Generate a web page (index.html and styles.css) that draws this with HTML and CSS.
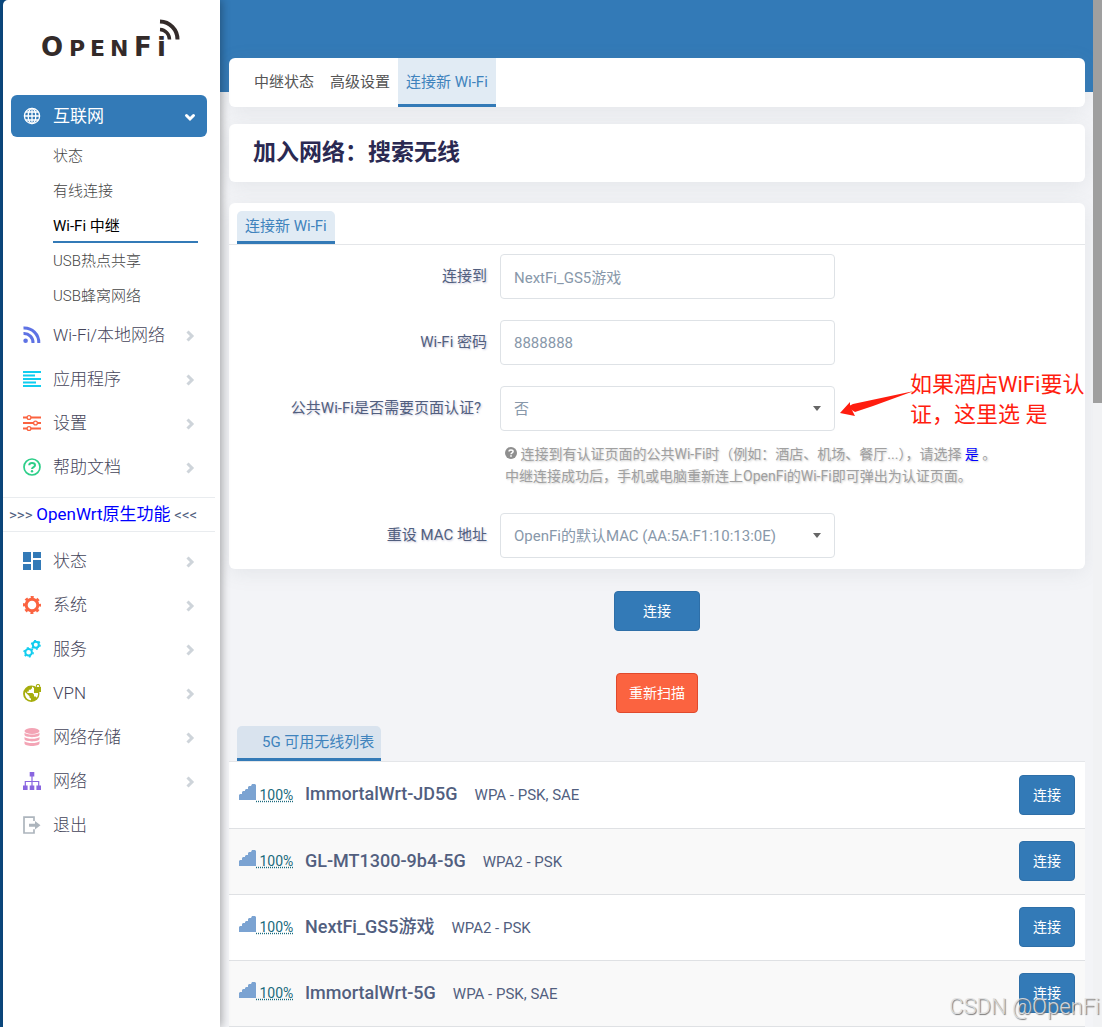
FILE: index.html
```html
<!DOCTYPE html>
<html lang="zh-CN">
<head>
<meta charset="utf-8">
<meta name="viewport" content="width=device-width, initial-scale=1">
<title>OpenFi - Wi-Fi 中继</title>
<link rel="stylesheet" href="styles.css">
</head>
<body>
<div class="shell">
  <aside class="sidebar">
    <a class="logo" href="#" aria-label="OpenFi">
      <svg width="146" height="48" viewBox="-4 0 146 48">
        <g class="logo-text">
          <text class="logo-big" x="-2" y="37">O</text>
          <text class="logo-small" x="26" y="37">P</text>
          <text class="logo-small" x="47" y="37">E</text>
          <text class="logo-small" x="67" y="37">N</text>
          <text class="logo-big" x="91" y="37">F</text>
          <text class="logo-big" x="114" y="37">i</text>
        </g>
        <g fill="none" stroke="#332b2a">
          <path d="M117 10.500a10 10 0 0 1 9.500 10" stroke-width="3.500"/>
          <path d="M117 2.500a18 18 0 0 1 17.500 18" stroke-width="4"/>
        </g>
      </svg>
    </a>
    <nav class="menu">
      <a class="item item-active" href="#">
        <svg class="icon" viewBox="0 0 18 18" fill="none" stroke="#fff" stroke-width="1.300"><circle cx="9" cy="9" r="7.600"/><ellipse cx="9" cy="9" rx="3.800" ry="7.600"/><path d="M9 1v16M1 9h16M2.500 5h13M2.500 13h13"/></svg>
        <span>互联网</span>
        <svg class="arrow" viewBox="0 0 12 12" fill="none" stroke="#fff" stroke-width="3" stroke-linecap="round"><path d="M2.500 4.500L6 8l3.500-3.500"/></svg>
      </a>
      <div class="submenu">
        <a href="#">状态</a>
        <a href="#">有线连接</a>
        <a class="current" href="#">Wi-Fi 中继</a>
        <a href="#">USB热点共享</a>
        <a href="#">USB蜂窝网络</a>
      </div>
      <a class="item" href="#">
        <svg class="icon" viewBox="0 0 18 18" fill="none" stroke="#5e72e4" stroke-width="3"><circle cx="2.600" cy="14.800" r="2.300" fill="#5e72e4" stroke="none"/><path d="M.5 7.500A9 9 0 0 1 10 17M.5 2A14.500 14.500 0 0 1 15.800 17"/></svg>
        <span>Wi-Fi/本地网络</span>
        <svg class="arrow" viewBox="0 0 12 12"><path d="M3.500 1.500L8 6l-4.500 4.500"/></svg>
      </a>
      <a class="item" href="#">
        <svg class="icon" viewBox="0 0 18 18" stroke="#11cdef" stroke-width="2"><path d="M0 2h18M0 5.500h12M0 9h18M0 12.500h13M0 16h18"/></svg>
        <span>应用程序</span>
        <svg class="arrow" viewBox="0 0 12 12"><path d="M3.500 1.500L8 6l-4.500 4.500"/></svg>
      </a>
      <a class="item" href="#">
        <svg class="icon" viewBox="0 0 18 18" fill="#fff" stroke="#fb6340" stroke-width="2"><path d="M0 3.500h18M0 9h18M0 14.500h18"/><g stroke-width="1.300"><circle cx="6" cy="3.500" r="1.900"/><circle cx="12.500" cy="9" r="1.900"/><circle cx="6" cy="14.500" r="1.900"/></g></svg>
        <span>设置</span>
        <svg class="arrow" viewBox="0 0 12 12"><path d="M3.500 1.500L8 6l-4.500 4.500"/></svg>
      </a>
      <a class="item" href="#">
        <svg class="icon" viewBox="0 0 18 18" fill="none" stroke="#2dce89" stroke-width="1.700"><circle cx="9" cy="9" r="8"/><path d="M6.200 7.300C6.300 5.600 7.500 5 9 5c1.700 0 3 .8 3 2.300C12 9.200 9.200 9 9 11" stroke-width="2"/><circle cx="9" cy="13.300" r="1.200" fill="#2dce89" stroke="none"/></svg>
        <span>帮助文档</span>
        <svg class="arrow" viewBox="0 0 12 12"><path d="M3.500 1.500L8 6l-4.500 4.500"/></svg>
      </a>
    </nav>
    <div class="divider">&gt;&gt;&gt; <a href="#">OpenWrt原生功能</a> &lt;&lt;&lt;</div>
    <nav class="menu">
      <a class="item" href="#">
        <svg class="icon" viewBox="0 0 18 18" fill="#337ab7"><path d="M0 0h8v10H0zM0 12h8v6H0zM10 0h8v6h-8zM10 8h8v10h-8z"/></svg>
        <span>状态</span>
        <svg class="arrow" viewBox="0 0 12 12"><path d="M3.500 1.500L8 6l-4.500 4.500"/></svg>
      </a>
      <a class="item" href="#">
        <svg class="icon" viewBox="0 0 18 18" fill="none" stroke="#fb6340"><circle cx="9" cy="9" r="5.800" stroke-width="3"/><circle cx="9" cy="9" r="7.900" stroke-width="2.200" stroke-dasharray="3.100 3.104" stroke-dashoffset="1.550"/></svg>
        <span>系统</span>
        <svg class="arrow" viewBox="0 0 12 12"><path d="M3.500 1.500L8 6l-4.500 4.500"/></svg>
      </a>
      <a class="item" href="#">
        <svg class="icon" viewBox="0 0 18 18" fill="none" stroke="#11cdef"><g stroke-width="2"><circle cx="5.600" cy="12.300" r="3.300"/><circle cx="12.800" cy="4.800" r="3"/></g><g stroke-width="1.400"><circle cx="5.600" cy="12.300" r="4.600" stroke-dasharray="2 2.817"/><circle cx="12.800" cy="4.800" r="4.300" stroke-dasharray="2 2.503"/></g></svg>
        <span>服务</span>
        <svg class="arrow" viewBox="0 0 12 12"><path d="M3.500 1.500L8 6l-4.500 4.500"/></svg>
      </a>
      <a class="item" href="#">
        <svg class="icon" viewBox="0 0 18 18"><circle cx="8.300" cy="9.700" r="8.200" fill="#a6ad0c"/><path d="M2 8l4.500 4.200v1.300l1.500 1.300v1.500C4 16 1.500 12.500 2 8zM9 2.500v1.800L7.500 5.800H5.800v1.700H4.300v1.600h5.200l1.500 1.500v2h1.700l1 1.200c1-1.300 1.500-3 1.300-4.800H11V4z" fill="#fff"/><path d="M12 3h6v5h-6z" fill="#a6ad0c"/><path d="M13.300 3.500V2.200a1.700 1.700 0 0 1 3.400 0v1.300" fill="none" stroke="#a6ad0c" stroke-width="1.100"/></svg>
        <span>VPN</span>
        <svg class="arrow" viewBox="0 0 12 12"><path d="M3.500 1.500L8 6l-4.500 4.500"/></svg>
      </a>
      <a class="item" href="#">
        <svg class="icon" viewBox="0 0 18 18" fill="#f3a4b5"><ellipse cx="9" cy="3" rx="7.500" ry="3"/><path d="M1.500 4.800c2 2.400 13 2.400 15 0v2c0 3.200-15 3.200-15 0zM1.500 9c2 2.400 13 2.400 15 0v2c0 3.200-15 3.200-15 0zM1.500 13.200c2 2.400 13 2.400 15 0v2c0 3.600-15 3.600-15 0z"/></svg>
        <span>网络存储</span>
        <svg class="arrow" viewBox="0 0 12 12"><path d="M3.500 1.500L8 6l-4.500 4.500"/></svg>
      </a>
      <a class="item" href="#">
        <svg class="icon" viewBox="0 0 18 18" fill="#8965e0"><path d="M6.700 0h4.600v4.600H6.700zM0 13.400h4.600V18H0zM6.700 13.400h4.600V18H6.700zM13.400 13.400H18V18h-4.600z"/><path d="M9 4v10M2.300 14v-4.500h13.400V14" fill="none" stroke="#8965e0" stroke-width="1.200"/></svg>
        <span>网络</span>
        <svg class="arrow" viewBox="0 0 12 12"><path d="M3.500 1.500L8 6l-4.500 4.500"/></svg>
      </a>
      <a class="item" href="#">
        <svg class="icon" viewBox="0 0 18 18" fill="none" stroke="#adb5bd" stroke-width="1.700"><path d="M11 5V1.200H1V17h10v-3.800"/><path d="M6 7.800h6V5l5.500 4.300L12 13.500v-2.700H6z" fill="#adb5bd" stroke="none"/></svg>
        <span>退出</span>
      </a>
    </nav>
  </aside>

  <main class="main">
    <nav class="card tabs">
      <a href="#">中继状态</a>
      <a href="#">高级设置</a>
      <a class="selected" href="#">连接新 Wi-Fi</a>
    </nav>

    <header class="card heading"><h1>加入网络：搜索无线</h1></header>

    <form class="join" onsubmit="return false">
      <section class="card panel">
        <div class="panel-head"><a class="tab" href="#">连接新 Wi-Fi</a></div>
        <div class="fields">
          <div class="field">
            <label for="ssid">连接到</label>
            <div class="control"><input id="ssid" type="text" value="NextFi_GS5游戏"></div>
          </div>
          <div class="field">
            <label for="key">Wi-Fi 密码</label>
            <div class="control"><input id="key" type="text" value="8888888"></div>
          </div>
          <div class="field">
            <label class="question" for="portal">公共Wi-Fi是否需要页面认证?</label>
            <div class="control">
              <div class="select"><select id="portal"><option>否</option><option>是</option></select></div>
              <p class="help">
                <svg width="12" height="12" viewBox="0 0 12 12"><circle cx="6" cy="6" r="6" fill="#8f8f8f"/><path d="M4 4.600C4 3.300 5 2.900 6 2.900s2.100.5 2.100 1.600C8.100 5.900 6 5.700 6 7.300" fill="none" stroke="#fff" stroke-width="1.500"/><path d="M5.200 8.200h1.600v1.500H5.200z" fill="#fff"/></svg>
                连接到有认证页面的公共Wi-Fi时（例如：酒店、机场、餐厅...），请选择 <b>是</b> 。<br>中继连接成功后，手机或电脑重新连上OpenFi的Wi-Fi即可弹出为认证页面。
              </p>
              <div class="note">
                <svg width="74" height="32" viewBox="0 0 74 32" fill="#ff1d0f"><path d="M74 3L13 16 7 19l8 5 18-6z"/><path d="M0 25L10 14v5l2 3 3 6z"/></svg>
                <p>如果酒店WiFi要认<br>证，这里选 是</p>
              </div>
            </div>
          </div>
          <div class="field">
            <label for="mac">重设 MAC 地址</label>
            <div class="control">
              <div class="select"><select id="mac"><option>OpenFi的默认MAC (AA:5A:F1:10:13:0E)</option></select></div>
            </div>
          </div>
        </div>
      </section>
      <div class="actions">
        <button class="btn btn-wide" type="submit">连接</button>
        <button class="btn btn-rescan" type="button">重新扫描</button>
      </div>
    </form>

    <section>
      <div class="panel-head"><a class="tab list-tab" href="#">5G 可用无线列表</a></div>
      <table class="networks">
        <tbody>
          <tr>
            <td class="signal"><svg viewBox="0 0 17 16"><path d="M0 16v-5l1-1h2V8l1-1h2V6l1-1h2V3l1-1h2l1-2h3l1 1v15z"/></svg><abbr title="信号 100%">&nbsp;100%</abbr></td>
            <td><strong>ImmortalWrt-JD5G</strong><span>WPA - PSK, SAE</span></td>
            <td class="action"><button class="btn" type="button">连接</button></td>
          </tr>
          <tr>
            <td class="signal"><svg viewBox="0 0 17 16"><path d="M0 16v-5l1-1h2V8l1-1h2V6l1-1h2V3l1-1h2l1-2h3l1 1v15z"/></svg><abbr title="信号 100%">&nbsp;100%</abbr></td>
            <td><strong>GL-MT1300-9b4-5G</strong><span>WPA2 - PSK</span></td>
            <td class="action"><button class="btn" type="button">连接</button></td>
          </tr>
          <tr>
            <td class="signal"><svg viewBox="0 0 17 16"><path d="M0 16v-5l1-1h2V8l1-1h2V6l1-1h2V3l1-1h2l1-2h3l1 1v15z"/></svg><abbr title="信号 100%">&nbsp;100%</abbr></td>
            <td><strong>NextFi_GS5游戏</strong><span>WPA2 - PSK</span></td>
            <td class="action"><button class="btn" type="button">连接</button></td>
          </tr>
          <tr>
            <td class="signal"><svg viewBox="0 0 17 16"><path d="M0 16v-5l1-1h2V8l1-1h2V6l1-1h2V3l1-1h2l1-2h3l1 1v15z"/></svg><abbr title="信号 100%">&nbsp;100%</abbr></td>
            <td><strong>ImmortalWrt-5G</strong><span>WPA - PSK, SAE</span></td>
            <td class="action"><button class="btn" type="button">连接</button></td>
          </tr>
        </tbody>
      </table>
    </section>
  </main>

  <div class="scrollbar"><div class="thumb"></div></div>
  <div class="watermark">CSDN @OpenFi</div>
</div>
</body>
</html>
```

FILE: styles.css
```css
* { box-sizing: border-box; }

body {
  margin: 0;
  background: #0b4a82;
  color: #525f7f;
  font: 15px/22px Roboto, "Noto Sans CJK SC", sans-serif;
}

a { color: inherit; text-decoration: none; }
p { margin: 0; }

.shell {
  position: relative;
  display: flex;
  min-height: 100vh;
  padding-left: 3px;
}

/* Sidebar */
.sidebar {
  position: relative;
  z-index: 1;
  flex: 0 0 217px;
  background: #fff;
  border-top-left-radius: 5px;
  box-shadow: 2px 0 8px rgba(0, 0, 0, .3);
}

.logo { display: block; height: 95px; padding: 19px 0 0 36px; }
.logo svg { display: block; }
.logo-text {
  font-family: "DejaVu Sans", sans-serif;
  font-weight: 700;
  fill: #332b2a;
}
.logo-big { font-size: 26px; }
.logo-small { font-size: 22px; }

.menu { padding: 0 13px 0 8px; }

.item {
  display: flex;
  align-items: center;
  height: 44px;
  padding: 0 11px 0 12px;
  font-size: 17px;
  font-weight: 300;
  color: #45455a;
}
.item span { flex: 1; }
.item-active {
  height: 42px;
  margin-bottom: 1px;
  border-radius: 6px;
  background: #337ab7;
  color: #fff;
  font-weight: 400;
}
.icon { width: 18px; height: 18px; margin-right: 12px; }
.arrow { width: 12px; height: 12px; margin-top: 2px; }
.item:not(.item-active) .arrow { fill: none; stroke: #ced4da; stroke-width: 3; }

.submenu { display: flex; flex-direction: column; padding: 0 9px 0 42px; }
.submenu a {
  height: 35px;
  line-height: 36px;
  font-weight: 300;
  color: #444;
  border-bottom: 2px solid transparent;
}
.submenu .current { color: #000; font-weight: 400; border-color: #337ab7; }

.divider {
  height: 35px;
  margin: 8px 5px 7px 0;
  padding-left: 6px;
  border: solid #e9ecef;
  border-width: 1px 0;
  line-height: 32px;
}
.divider a { color: #00f; font-size: 17px; }

/* Main column */
.main {
  flex: 1;
  min-width: 0;
  padding: 58px 8px 0 9px;
  background: linear-gradient(#337ab7 92px, #f3f4f7 92px);
}

.card {
  border-radius: 6px;
  background: #fff;
  box-shadow: 0 4px 20px rgba(120, 130, 140, .12);
}

.tabs { display: flex; height: 49px; padding-left: 17px; color: #555; }
.tabs a { padding: 0 8px; line-height: 48px; border-bottom: 3px solid transparent; }
.tabs .selected, .tab {
  background: #e1ebf4;
  color: #3f83bd;
  border-bottom: 3px solid #337ab7;
}

.heading { margin: 17px 0 21px; padding: 0 24px; }
h1 { margin: 0; font-size: 23px; line-height: 58px; color: #2a2952; }

.panel-head { display: flex; padding: 8px 8px 0; border-bottom: 1px solid #e4e6e9; }
.tab { padding: 4px 8px; border-radius: 5px 5px 0 0; }

.fields { display: flex; flex-direction: column; gap: 21px; padding: 9px 0 11px; }
.field { display: flex; gap: 13px; }
.field label {
  flex: 0 0 258px;
  text-align: right;
  line-height: 45px;
  text-shadow: 1px 1px 2px #ccd;
}
.field .question { padding-right: 6px; }
.control { position: relative; flex: 1; min-width: 0; }
.control input, .select { display: block; width: 100%; max-width: 335px; height: 45px; }
.control input, .control select {
  padding: 0 13px;
  border: 1px solid #dee2e6;
  border-radius: 4px;
  background: #fff;
  color: #8898aa;
  font: inherit;
}
.select { position: relative; }
.select select { width: 100%; height: 45px; appearance: none; }
.select::after {
  content: "";
  position: absolute;
  right: 14px;
  top: 20px;
  border: solid transparent;
  border-width: 5px 4px 0;
  border-top-color: #666;
}

.help {
  padding: 12px 0 5px 5px;
  font-size: 14px;
  color: #a0a0a0;
  white-space: nowrap;
  text-shadow: 1px 1px 2px #ccc;
}
.help b { color: #00f; font-weight: 400; }

/* Callout drawn over the form */
.note {
  position: absolute;
  left: 340px;
  top: -16px;
  display: flex;
  color: #ff1d0f;
  font-size: 22px;
  line-height: 30px;
  white-space: nowrap;
}
.note svg { margin-top: 18px; margin-right: -4px; }

.actions { display: flex; flex-direction: column; align-items: center; gap: 42px; padding: 22px 0 5px; }
.btn {
  height: 40px;
  padding: 0 13px;
  border: 1px solid #2e6fa8;
  border-radius: 4px;
  background: #337ab7;
  color: #fff;
  font: inherit;
  font-size: 14px;
}
.btn-wide { padding: 0 28px; }
.btn-rescan { padding: 0 12px; background: #fb6340; border-color: #e0492c; }

/* Network list */
.list-tab { padding: 5px 7px 5px 25px; background: #d9e3ee; }

.networks { width: 100%; border-collapse: collapse; background: #fff; }
.networks td { height: 66px; padding: 0; border-bottom: 1px solid #dfe1e4; }
.networks tr:nth-child(even) { background: #f9f9f9; }
.networks .signal { width: 76px; padding-left: 10px; white-space: nowrap; }
.signal svg { width: 17px; height: 16px; fill: #7ba3d2; }
.signal abbr { font-size: 14px; color: #1b6a7c; text-decoration: underline dotted; }
.networks strong { margin-right: 17px; font-size: 18px; font-weight: 500; }
.networks .action { padding-right: 10px; text-align: right; }

.scrollbar { flex: 0 0 9px; background: #f1f2f4; }
.thumb { height: 403px; background: #9f9f9f; }

.watermark {
  position: absolute;
  right: 2px;
  bottom: 6px;
  z-index: 2;
  font-size: 22px;
  line-height: 28px;
  font-weight: 300;
  color: rgba(225, 225, 225, .9);
  text-shadow: 1px 1px 1px #777;
}
```
